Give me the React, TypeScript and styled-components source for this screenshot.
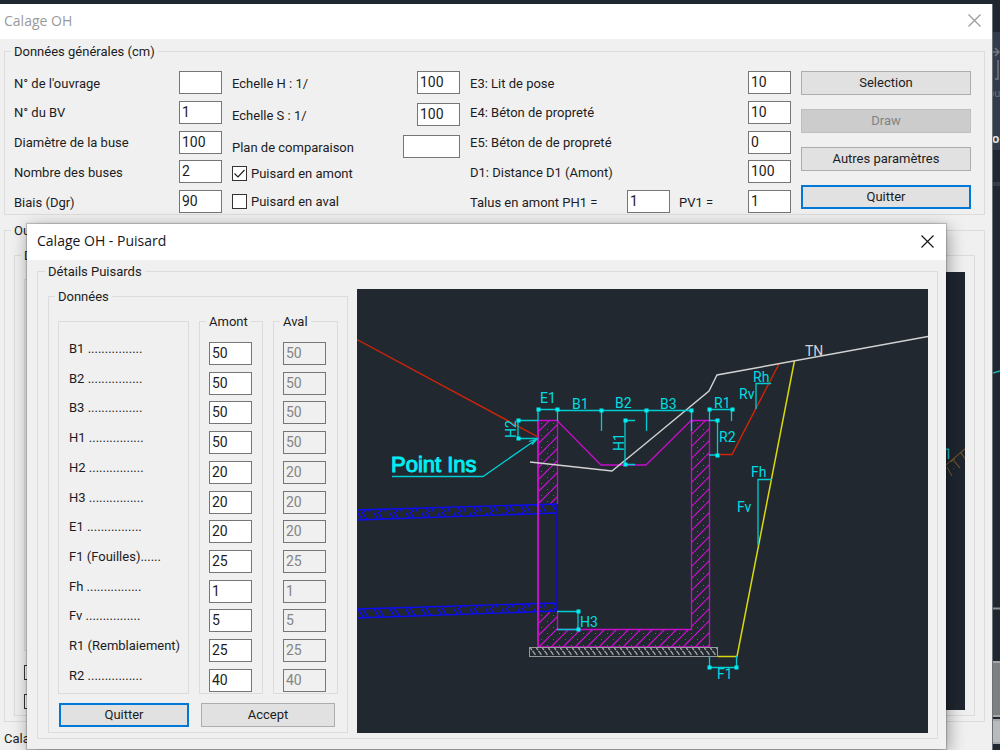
import React from 'react';
import styled, { createGlobalStyle } from 'styled-components';

const ui = 'Roboto, "Liberation Sans", Arial, sans-serif';
const caption = '"Open Sans", "Noto Sans", sans-serif';
const cad = 'Roboto, "Liberation Sans", sans-serif';
const cadTitle = '"Liberation Sans", Arial, sans-serif';

const GlobalStyle = createGlobalStyle`
  *, *::before, *::after { box-sizing: border-box; }
  body {
    margin: 0;
    background: #1f2730;
    color: #1c1c22;
    font: 13px/16px ${ui};
  }
`;

const Desktop = styled.div`
  position: relative;
  display: grid;
  grid-template-columns: minmax(0, 1fr) 7px;
  height: 100vh;
  padding-top: 4px;
  overflow: hidden;
  background: #1f2730;
`;

const Window = styled.section`
  border-right: 1px solid #6d7075;
  background: #f0f0f0;
`;

const ModalWindow = styled(Window)`
  position: absolute;
  top: 224px;
  left: 27px;
  right: 54px;
  border-right: 0;
  box-shadow: 0 0 1px 1px rgba(0, 0, 0, 0.18), 2px 4px 16px rgba(0, 0, 0, 0.38);
`;

const TitleBar = styled.header<{ $active?: boolean }>`
  display: flex;
  align-items: center;
  justify-content: space-between;
  height: ${(p) => (p.$active ? 36 : 35)}px;
  padding: ${(p) => (p.$active ? '0 12px 2px 10px' : '0 11px 2px 4px')};
  background: #fff;
  color: ${(p) => (p.$active ? '#16161c' : '#9a9a9a')};
`;

const Title = styled.h1`
  margin: 0;
  font: 400 14px/18px ${caption};
`;

const CloseButton = styled.button`
  display: flex;
  padding: 0;
  border: 0;
  background: none;
  color: inherit;
`;

const MainBody = styled.div`
  display: flex;
  flex-direction: column;
  gap: 7px;
  padding: 4px 7px 0 4px;
`;

const ModalBody = styled.div`
  padding: 3px 8px 10px 10px;
`;

const Group = styled.fieldset`
  min-width: 0;
  margin: 0;
  padding: 9px 9px 5px;
  border: 1px solid #dcdcdc;
`;

const Legend = styled.legend`
  height: 16px;
  margin-left: -3px;
  padding: 0 3px;
  line-height: 18px;
  white-space: nowrap;
`;

const GeneralGroup = styled(Group)`
  padding: 12px 13px 1px 9px;
`;

const GeneralGrid = styled.div`
  display: grid;
  grid-template-columns: 208px 228px minmax(0, 1fr) 170px;
  gap: 10px;
`;

const Column = styled.div<{ $gap?: number }>`
  display: flex;
  flex-direction: column;
  justify-content: ${(p) => (p.$gap === undefined ? 'space-between' : 'flex-start')};
  gap: ${(p) => p.$gap ?? 0}px;
`;

const Row = styled.div`
  display: flex;
  align-items: center;
  height: 23px;
  white-space: nowrap;
`;

const RowLabel = styled.label`
  flex: 1;
  padding-top: 2px;
`;

const TextBox = styled.input<{ $wide?: boolean }>`
  width: ${(p) => (p.$wide ? 57 : 43)}px;
  height: 23px;
  padding: 0 2px 1px;
  border: 1px solid #767676;
  border-radius: 0;
  background: #fff;
  color: #1c1c22;
  font: 14px/16px ${ui};
  &:disabled {
    background: #f0f0f0;
    color: #858585;
  }
`;

const Talus = styled.div`
  display: grid;
  grid-template-columns: minmax(0, 1fr) 43px 78px 43px;
  align-items: center;
  height: 23px;
  white-space: nowrap;
`;

const TalusLabel = styled.label<{ $inset?: boolean }>`
  padding: 2px 0 0 ${(p) => (p.$inset ? 9 : 0)}px;
`;

const CheckLabel = styled.label<{ $compact?: boolean }>`
  position: relative;
  display: flex;
  align-items: center;
  gap: 4px;
  height: ${(p) => (p.$compact ? 15 : 23)}px;
  white-space: nowrap;
`;

const CheckBox = styled.input.attrs({ type: 'checkbox' })`
  appearance: none;
  width: 15px;
  height: 15px;
  margin: 0;
  border: 1px solid #333;
  background: #fff;
  & + svg { display: none; }
  &:checked + svg { display: block; }
`;

const CheckMark = styled.svg`
  position: absolute;
  left: 0;
  pointer-events: none;
`;

const PushButton = styled.button<{ $focus?: boolean }>`
  height: 24px;
  padding: 0;
  border: ${(p) => (p.$focus ? '2px solid #0078d7' : '1px solid #adadad')};
  background: #e1e1e1;
  color: #1c1c22;
  font: 13px/16px ${ui};
  &:disabled {
    border-color: #bfbfbf;
    background: #ccc;
    color: #838383;
  }
`;

const WorkGrid = styled.div`
  display: grid;
  grid-template-columns: 300px minmax(0, 1fr);
  gap: 10px;
`;

const SideOptions = styled.div`
  display: flex;
  flex-direction: column;
  gap: 14px;
  padding-top: 7px;
`;

const Frame = styled.div`
  height: 372px;
  border: 1px solid #dcdcdc;
`;

const WorkDrawing = styled.svg`
  display: block;
  width: 100%;
  height: 438px;
  background: #1f262f;
`;

const Status = styled.p`
  margin: 2px 0 0;
`;

const DetailsGroup = styled(Group)`
  padding-left: 10px;
`;

const Details = styled.div`
  display: grid;
  grid-template-columns: 300px minmax(0, 1fr);
  gap: 9px;
`;

const DataColumns = styled.div`
  display: grid;
  grid-template-columns: 131px 64px 65px;
  align-items: end;
  gap: 10px;
`;

const ValueGroup = styled(Group)`
  padding: 13px 9px 1px;
`;

const Values = styled.div`
  display: flex;
  flex-direction: column;
  justify-content: space-between;
  height: 350px;
`;

const NameBox = styled.div`
  padding: 15px 10px 6px;
  border: 1px solid #dcdcdc;
`;

const NameLabel = styled.label`
  height: 23px;
  line-height: 23px;
  white-space: nowrap;
`;

const ModalActions = styled.div`
  display: grid;
  grid-template-columns: 130px 134px;
  gap: 12px;
  padding: 9px 0 0 1px;
`;

const Section = styled.svg`
  display: block;
  width: 100%;
  height: 444px;
  margin-top: 1px;
  background: #212830;
`;

const Strip = styled.aside`
  display: flex;
  flex-direction: column;
  overflow: hidden;
  color: #68707a;
`;

const Ribbon = styled.div`
  margin-top: 28px;
  height: 118px;
  overflow: hidden;
  background: #333c4a;
`;

const Canvas = styled.svg`
  display: block;
  flex: none;
`;

const Palette = styled.div<{ $tone: string; $size: number }>`
  flex: none;
  height: ${(p) => p.$size}px;
  border-top: 2px solid #a5a7aa;
  border-bottom: 2px solid #a5a7aa;
  margin-bottom: 2px;
  background: ${(p) => p.$tone};
`;

const CloseIcon = () => (
  <svg width="13" height="13" viewBox="0 0 13 13" stroke="currentColor" fill="none" aria-hidden="true">
    <path d="M.5 .5l12 12M12.5 .5l-12 12" strokeWidth="1.2" />
  </svg>
);

const Check = ({ label, checked, compact }: { label: string; checked?: boolean; compact?: boolean }) => (
  <CheckLabel $compact={compact}>
    <CheckBox defaultChecked={checked} aria-label={label || 'Option'} />
    <CheckMark width="15" height="15" viewBox="0 0 15 15" fill="none" stroke="#222" strokeWidth="1.2">
      <path d="M2.5 7.5l3.5 3.5 6.5-7" />
    </CheckMark>
    {label}
  </CheckLabel>
);

const Field = ({ id, label, value, wide }: { id: string; label: string; value: string; wide?: boolean }) => (
  <Row>
    <RowLabel htmlFor={id}>{label}</RowLabel>
    <TextBox id={id} defaultValue={value} $wide={wide} />
  </Row>
);

const parameters = [
  { name: 'B1', text: 'B1 ................', value: '50' },
  { name: 'B2', text: 'B2 ................', value: '50' },
  { name: 'B3', text: 'B3 ................', value: '50' },
  { name: 'H1', text: 'H1 ................', value: '50' },
  { name: 'H2', text: 'H2 ................', value: '20' },
  { name: 'H3', text: 'H3 ................', value: '20' },
  { name: 'E1', text: 'E1 ................', value: '20' },
  { name: 'F1', text: 'F1 (Fouilles)......', value: '25' },
  { name: 'Fh', text: 'Fh ................', value: '1' },
  { name: 'Fv', text: 'Fv ................', value: '5' },
  { name: 'R1', text: 'R1 (Remblaiement)', value: '25' },
  { name: 'R2', text: 'R2 ................', value: '40' },
];

const dimensionNames: [string, number, number][] = [
  ['E1', 540, 403],
  ['B1', 572, 409],
  ['B2', 615, 408],
  ['B3', 660, 409],
  ['R1', 714, 408],
  ['R2', 719, 442],
  ['Rh', 753, 382],
  ['Rv', 739, 399],
  ['Fh', 751, 477],
  ['Fv', 737, 512],
  ['H3', 580, 627],
  ['F1', 717, 679],
];

const gripPoints: [number, number][] = [
  [538, 409], [557, 409], [601, 410], [646, 410], [691, 410], [709, 409], [732, 409],
  [518, 420], [518, 438], [625, 420], [625, 464], [717, 420], [717, 455],
  [578, 611], [578, 629], [709, 667], [736, 667],
];

const SectionDrawing = () => (
  <Section viewBox="357 289 571 444" role="img" aria-label="Coupe du puisard">
    <defs>
      <pattern id="concrete" x="538" y="420" width="12" height="12" patternUnits="userSpaceOnUse">
        <path d="M-1 13L13 -1" stroke="#d60cd9" strokeWidth="1.2" fill="none" />
        <path d="M3 3.5h1M9 9.5h1" stroke="#d60cd9" strokeWidth="1" />
      </pattern>
      <pattern id="lean" x="530" y="647" width="6" height="9" patternUnits="userSpaceOnUse">
        <path d="M-1 -1L7 10" stroke="#a3a5a7" strokeWidth="1.4" strokeDasharray="5 1" fill="none" />
      </pattern>
      <pattern id="pipe" x="357" y="500" width="16" height="12" patternUnits="userSpaceOnUse">
        <path d="M0 0L8 12M5 0L13 12" stroke="#0c0cf5" strokeWidth="1.4" fill="none" />
      </pattern>
    </defs>

    <path d="M538 420H557V504H538zM538 612H557V629H691V420H709V647H538z" fill="url(#concrete)" />
    <path d="M357 510L557 504V513L357 520z M357 609L557 603V611L357 618z" fill="url(#pipe)" stroke="#0c0cf5" strokeWidth="1.4" />

    <g fill="none" stroke="#c60cc9" strokeWidth="1.3">
      <path d="M557.5 504V420.5H538V647H709.5V420.5H691.5V629.5H557.5V612" />
      <path d="M557 420.5L601 465H646L691 420.5" />
      <path d="M538 420V647" strokeWidth="2" />
    </g>
    <path d="M557 504V612" stroke="#1010b4" strokeWidth="2" />
    <rect x="529.5" y="647.5" width="188" height="9" fill="url(#lean)" stroke="#97999b" />

    <path d="M357 339.5L538 437M779 364L732 454.5H718" fill="none" stroke="#cf2409" strokeWidth="1.4" />
    <path d="M794.5 360.5L737 656.5H718" fill="none" stroke="#d8d80c" strokeWidth="1.5" />
    <path d="M530 462L612 471L645 444L709 391L717 375L928 336.5" fill="none" stroke="#d2d2d2" strokeWidth="1.4" />

    <g fill="none" stroke="#00cdd2" strokeWidth="1.3">
      <path d="M538 421V409.5H557.5V421M557 410.5H691.5V431M601.5 410V431M646.5 410V431" />
      <path d="M709.5 421V409.5H731.5V421M709 420.5H717.5V455H709" />
      <path d="M538 420.5H518V438.5H538M635 420.5H625V464.5H635" />
      <path d="M771 383.5H756V409M772 479.5H758V545" />
      <path d="M557 611.5H578V629.5H557M709.5 656V667.5H736.5V656" />
      <path d="M392 476.5H483L537 439M529 441.5L537 439L532 444.5" />
    </g>
    <g fill="#00eef2">
      {gripPoints.map(([x, y]) => (
        <rect key={`${x}-${y}`} x={x - 1.5} y={y - 1.5} width="4" height="4" />
      ))}
    </g>

    <g fill="#00dde2" fontFamily={cad} fontSize="14">
      {dimensionNames.map(([name, x, y]) => (
        <text key={name} x={x} y={y}>{name}</text>
      ))}
      <text transform="translate(516 438) rotate(-90)">H2</text>
      <text transform="translate(624 451) rotate(-90)">H1</text>
    </g>
    <text x="805" y="356" fill="#d2d2d2" fontFamily={cad} fontSize="14">TN</text>
    <text x="391" y="472" fill="#00eef2" stroke="#00eef2" strokeWidth="1" fontFamily={cadTitle} fontSize="22">Point Ins</text>
  </Section>
);

export default function App() {
  return (
    <>
      <GlobalStyle />
      <Desktop>
        <Window>
          <TitleBar>
            <Title>Calage OH</Title>
            <CloseButton aria-label="Fermer"><CloseIcon /></CloseButton>
          </TitleBar>
          <MainBody>
            <GeneralGroup>
              <Legend>Données générales (cm)</Legend>
              <GeneralGrid>
                <Column>
                  <Field id="ouvrage" label="N° de l'ouvrage" value="" />
                  <Field id="bv" label="N° du BV" value="1" />
                  <Field id="diametre" label="Diamètre de la buse" value="100" />
                  <Field id="nombre" label="Nombre des buses" value="2" />
                  <Field id="biais" label="Biais (Dgr)" value="90" />
                </Column>
                <Column $gap={4}>
                  <Column $gap={9}>
                    <Field id="echelle-h" label="Echelle H : 1/" value="100" />
                    <Field id="echelle-s" label="Echelle S : 1/" value="100" />
                    <Field id="plan" label="Plan de comparaison" value="" wide />
                  </Column>
                  <Column $gap={5}>
                    <Check label="Puisard en amont" checked />
                    <Check label="Puisard en aval" />
                  </Column>
                </Column>
                <Column>
                  <Field id="e3" label="E3: Lit de pose" value="10" />
                  <Field id="e4" label="E4: Béton de propreté" value="10" />
                  <Field id="e5" label="E5: Béton de de propreté" value="0" />
                  <Field id="d1" label="D1: Distance D1 (Amont)" value="100" />
                  <Talus>
                    <TalusLabel htmlFor="ph1">Talus en amont PH1 =</TalusLabel>
                    <TextBox id="ph1" defaultValue="1" />
                    <TalusLabel htmlFor="pv1" $inset>PV1 =</TalusLabel>
                    <TextBox id="pv1" defaultValue="1" />
                  </Talus>
                </Column>
                <Column $gap={14}>
                  <PushButton>Selection</PushButton>
                  <PushButton disabled>Draw</PushButton>
                  <PushButton>Autres paramètres</PushButton>
                  <PushButton $focus>Quitter</PushButton>
                </Column>
              </GeneralGrid>
            </GeneralGroup>

            <Group>
              <Legend>Ouvrage</Legend>
              <Group>
                <Legend>Données</Legend>
                <WorkGrid>
                  <SideOptions>
                    <Frame />
                    <Check label="" compact />
                    <Check label="" compact />
                  </SideOptions>
                  <WorkDrawing viewBox="335 272 629 438" preserveAspectRatio="xMaxYMid slice" aria-hidden="true">
                    <path d="M941 449.5H947.5V459" fill="none" stroke="#18b7bb" strokeWidth="1.5" />
                    <path d="M944 466L964 449M946 467L951 476M953 461L959 468M960 453L965 460M950 462L954 459M952 469h1" fill="none" stroke="#75592c" />
                  </WorkDrawing>
                </WorkGrid>
              </Group>
            </Group>
            <Status>Calage OH</Status>
          </MainBody>
        </Window>

        <Strip>
          <Ribbon>
            <Canvas width="7" height="118" viewBox="0 0 7 118">
              <path d="M0 20H5M2 16l4 4-4 4M2 47H5V28" fill="none" stroke="#737a82" strokeWidth="1.5" />
              <text x="-5" y="65" fill="#68707a" fontFamily={ui} fontSize="11">ou</text>
              <text x="-1" y="111" fill="#dde0e4" fontFamily={ui} fontSize="13" fontWeight="700">o</text>
            </Canvas>
          </Ribbon>
          <Canvas width="7" height="511" viewBox="0 0 7 511">
            <path d="M0 34H7" stroke="#333c4a" strokeWidth="4" />
            <path d="M0 223L7 221" stroke="#18b7bb" strokeWidth="1.5" />
            <path d="M0 458.5H7" stroke="#8c8f93" strokeWidth="2" />
          </Canvas>
          <Palette $tone="#7d8081" $size={56} />
          <Palette $tone="#b9babc" $size={25} />
        </Strip>

        <ModalWindow role="dialog" aria-label="Calage OH - Puisard">
          <TitleBar $active>
            <Title as="h2">Calage OH - Puisard</Title>
            <CloseButton aria-label="Fermer"><CloseIcon /></CloseButton>
          </TitleBar>
          <ModalBody>
            <DetailsGroup>
              <Legend>Détails Puisards</Legend>
              <Details>
                <Group>
                  <Legend>Données</Legend>
                  <DataColumns>
                    <NameBox>
                      <Values>
                        {parameters.map((p) => (
                          <NameLabel key={p.name} htmlFor={`amont-${p.name}`}>{p.text}</NameLabel>
                        ))}
                      </Values>
                    </NameBox>
                    <ValueGroup>
                      <Legend>Amont</Legend>
                      <Values>
                        {parameters.map((p) => (
                          <TextBox key={p.name} id={`amont-${p.name}`} defaultValue={p.value} />
                        ))}
                      </Values>
                    </ValueGroup>
                    <ValueGroup>
                      <Legend>Aval</Legend>
                      <Values>
                        {parameters.map((p) => (
                          <TextBox key={p.name} aria-label={`${p.name} aval`} defaultValue={p.value} disabled />
                        ))}
                      </Values>
                    </ValueGroup>
                  </DataColumns>
                  <ModalActions>
                    <PushButton $focus>Quitter</PushButton>
                    <PushButton>Accept</PushButton>
                  </ModalActions>
                </Group>
                <SectionDrawing />
              </Details>
            </DetailsGroup>
          </ModalBody>
        </ModalWindow>
      </Desktop>
    </>
  );
}
